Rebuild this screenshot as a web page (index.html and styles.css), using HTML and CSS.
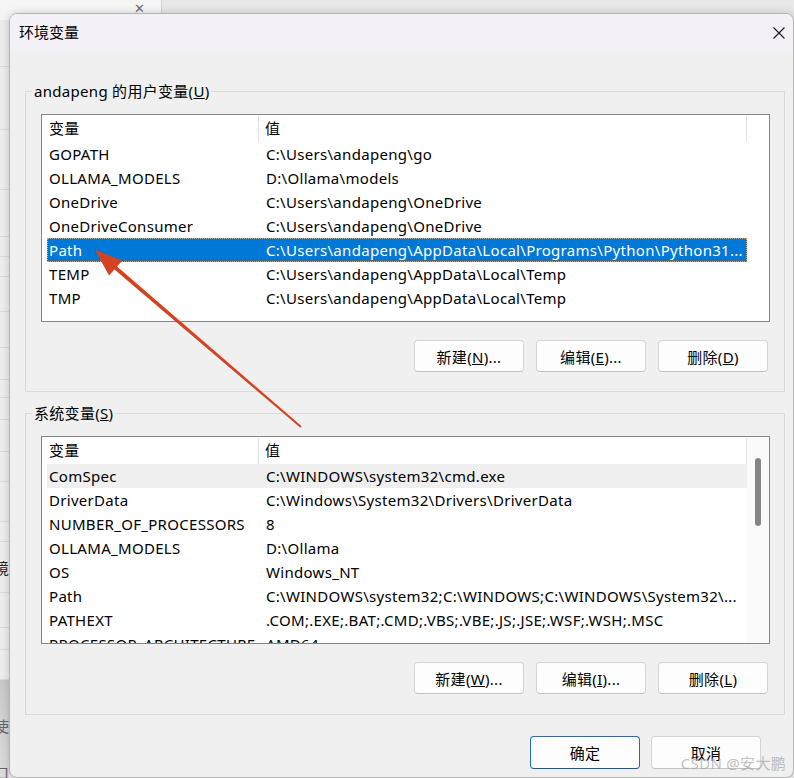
FILE: index.html
```html
<!DOCTYPE html>
<html lang="zh-CN">

<head>
    <meta charset="UTF-8">
    <meta name="viewport" content="width=device-width, initial-scale=1.0">
    <title>环境变量</title>
    <link rel="stylesheet" href="styles.css">
</head>

<body>
    <div class="desk">
        <!-- 后面的窗口 -->
        <div class="back-win"><span class="back-x">✕</span></div>
        <div class="back-side">
            <div class="side-row h54"></div>
            <div class="side-row h63"></div>
            <div class="side-row h60"></div>
            <div class="side-row h47"></div>
            <div class="side-row h20"></div>
            <div class="side-row h20"></div>
            <div class="side-row h35"></div>
            <div class="side-row h36"></div>
            <div class="side-row h32"></div>
            <div class="side-row h18"></div>
            <div class="side-row h22"></div>
            <div class="side-row h32"></div>
            <div class="side-row h30"></div>
            <div class="side-row h40"></div>
            <div class="side-row h20"></div>
            <div class="side-row h51 side-text"><span>环境</span></div>
            <div class="side-row h35"></div>
            <div class="side-row h22"></div>
            <div class="side-row h30"></div>
            <div class="side-dark">
                <div class="side-text dark-text"><span>快使</span></div>
                <div class="side-text dark-text low"><span>窗口</span></div>
            </div>
        </div>

        <div class="dialog">
            <div class="titlebar">
                <span class="title">环境变量</span>
                <svg class="close" width="12" height="12" viewBox="0 0 12 12">
                    <path d="M0.5 0.5 L11.5 11.5 M11.5 0.5 L0.5 11.5" stroke="#1a1a1a" stroke-width="1.1" fill="none" />
                </svg>
            </div>

            <div class="dlg-body">
                <fieldset class="group group-user">
                    <legend>andapeng 的用户变量(<u>U</u>)</legend>
                    <div class="list">
                        <div class="list-main">
                            <div class="list-head">
                                <div class="head-name">变量</div>
                                <div class="head-val">值</div>
                            </div>
                            <div class="row"><div class="cell-name">GOPATH</div><div class="cell-val">C:\Users\andapeng\go</div></div>
                            <div class="row"><div class="cell-name">OLLAMA_MODELS</div><div class="cell-val">D:\Ollama\models</div></div>
                            <div class="row"><div class="cell-name">OneDrive</div><div class="cell-val">C:\Users\andapeng\OneDrive</div></div>
                            <div class="row"><div class="cell-name">OneDriveConsumer</div><div class="cell-val">C:\Users\andapeng\OneDrive</div></div>
                            <div class="row selected"><div class="cell-name">Path</div><div class="cell-val">C:\Users\andapeng\AppData\Local\Programs\Python\Python31...</div></div>
                            <div class="row"><div class="cell-name">TEMP</div><div class="cell-val">C:\Users\andapeng\AppData\Local\Temp</div></div>
                            <div class="row"><div class="cell-name">TMP</div><div class="cell-val">C:\Users\andapeng\AppData\Local\Temp</div></div>
                        </div>
                        <div class="vscroll"></div>
                    </div>
                    <div class="btn-row">
                        <button class="btn">新建(<u>N</u>)...</button>
                        <button class="btn">编辑(<u>E</u>)...</button>
                        <button class="btn">删除(<u>D</u>)</button>
                    </div>
                </fieldset>

                <fieldset class="group group-sys">
                    <legend>系统变量(<u>S</u>)</legend>
                    <div class="list">
                        <div class="list-main">
                            <div class="list-head">
                                <div class="head-name">变量</div>
                                <div class="head-val">值</div>
                            </div>
                            <div class="row hover"><div class="cell-name">ComSpec</div><div class="cell-val">C:\WINDOWS\system32\cmd.exe</div></div>
                            <div class="row"><div class="cell-name">DriverData</div><div class="cell-val">C:\Windows\System32\Drivers\DriverData</div></div>
                            <div class="row"><div class="cell-name">NUMBER_OF_PROCESSORS</div><div class="cell-val">8</div></div>
                            <div class="row"><div class="cell-name">OLLAMA_MODELS</div><div class="cell-val">D:\Ollama</div></div>
                            <div class="row"><div class="cell-name">OS</div><div class="cell-val">Windows_NT</div></div>
                            <div class="row"><div class="cell-name">Path</div><div class="cell-val">C:\WINDOWS\system32;C:\WINDOWS;C:\WINDOWS\System32\...</div></div>
                            <div class="row"><div class="cell-name">PATHEXT</div><div class="cell-val">.COM;.EXE;.BAT;.CMD;.VBS;.VBE;.JS;.JSE;.WSF;.WSH;.MSC</div></div>
                            <div class="row"><div class="cell-name">PROCESSOR_ARCHITECTURE</div><div class="cell-val">AMD64</div></div>
                        </div>
                        <div class="vscroll track">
                            <div class="thumb"></div>
                        </div>
                    </div>
                    <div class="btn-row">
                        <button class="btn">新建(<u>W</u>)...</button>
                        <button class="btn">编辑(<u>I</u>)...</button>
                        <button class="btn">删除(<u>L</u>)</button>
                    </div>
                </fieldset>

                <div class="footer">
                    <button class="btn btn-big btn-ok">确定</button>
                    <button class="btn btn-big">取消</button>
                </div>
            </div>

            <div class="watermark">CSDN @安大鹏</div>
        </div>

        <!-- 红色箭头 -->
        <svg class="arrow" width="794" height="778" viewBox="0 0 794 778">
            <polygon fill="#d6421f"
                points="95,250 122,261 117,266.4 301.6,426.2 300.4,427.8 114.4,269.4 109,275.5" />
        </svg>
    </div>
</body>

</html>
```

FILE: styles.css
```css
* {
    box-sizing: border-box;
    margin: 0;
}

body {
    width: 794px;
    height: 778px;
    overflow: hidden;
    background-color: #e8e8e8;
    font-family: "Noto Sans", "Noto Sans CJK SC", sans-serif;
    font-size: 15px;
    color: #000;
}

.desk {
    position: relative;
    display: flex;
    width: 794px;
    height: 778px;
    padding-top: 13px;
}

/* 后面的窗口 */
.back-win {
    position: absolute;
    left: 0;
    top: 0;
    width: 162px;
    height: 20px;
    background-color: #f6f6f6;
    border-right: 1px solid #d2d2d2;
}

.back-x {
    position: absolute;
    left: 134px;
    top: 0;
    font-size: 13px;
    line-height: 16px;
    color: #6e6e6e;
}

.back-side {
    width: 9px;
    flex: none;
    display: flex;
    flex-direction: column;
    overflow: hidden;
    background-color: #ececec;
}

.side-row {
    flex: none;
    border-bottom: 1px solid #d8d8d8;
}

.h18 { height: 18px; }
.h20 { height: 20px; }
.h22 { height: 22px; }
.h30 { height: 30px; }
.h32 { height: 32px; }
.h35 { height: 35px; }
.h36 { height: 36px; }
.h40 { height: 40px; }
.h47 { height: 47px; }
.h51 { height: 51px; }
.h54 { height: 54px; }
.h60 { height: 60px; }
.h63 { height: 63px; }

.side-text {
    display: flex;
    justify-content: flex-end;
    align-items: center;
    white-space: nowrap;
    font-size: 15px;
    color: #222;
}

.side-dark {
    flex: 1;
    display: flex;
    flex-direction: column;
    background: linear-gradient(#c9c9c9, #dcdcdc);
}

.dark-text {
    height: 56px;
    padding-top: 34px;
    color: #666;
}

.dark-text.low {
    height: 42px;
    padding-top: 30px;
}

/* 对话框 */
.dialog {
    position: relative;
    flex: 1;
    display: flex;
    flex-direction: column;
    background-color: #f0f0f0;
    border: 1px solid #b4b4b4;
    border-radius: 8px;
    overflow: hidden;
    box-shadow: 0 0 8px rgba(0, 0, 0, 0.18);
    letter-spacing: 0.3px;
}

.titlebar {
    height: 37px;
    flex: none;
    display: flex;
    align-items: center;
    justify-content: space-between;
    padding: 0 8px 3px 9px;
    background-color: #f3f1f7;
}

.title {
    font-size: 15px;
    letter-spacing: 0;
}

.close {
    margin-top: 3px;
}

.dlg-body {
    padding: 0 8px 0 15px;
}

.group {
    border: 1px solid #dadada;
    padding: 0;
    min-width: 0;
}

.group-user {
    margin-top: 30px;
}

.group-sys {
    margin-top: 11px;
}

.group legend {
    margin-left: 6px;
    padding: 0 2px;
    line-height: 20px;
}

.list {
    display: flex;
    height: 208px;
    margin: 13px 14px 0 15px;
    background-color: #fff;
    border: 1px solid #858585;
    overflow: hidden;
}

.list-main {
    width: 705px;
    flex: none;
    padding-top: 1px;
}

.list-head {
    display: flex;
    height: 26px;
    line-height: 25px;
}

.head-name {
    width: 217px;
    padding-left: 7px;
    border-right: 1px solid #e3e3e3;
}

.head-val {
    width: 488px;
    padding-left: 6px;
    border-right: 1px solid #e3e3e3;
}

.row {
    display: flex;
    height: 24px;
    line-height: 24px;
    margin-left: 5px;
    width: 700px;
    white-space: nowrap;
}

.cell-name {
    width: 219px;
    flex: none;
    padding-left: 2px;
}

.cell-val {
    flex: 1;
    overflow: hidden;
}

.row.selected {
    background-color: #0078d7;
    color: #fff;
    outline: 1px dotted #f0a33c;
    outline-offset: -1px;
}

.row.hover {
    background-color: #efefef;
}

.vscroll {
    flex: 1;
    display: flex;
    justify-content: center;
    padding-top: 21px;
}

.vscroll.track {
    background-color: #fafafa;
}

.thumb {
    width: 6px;
    height: 68px;
    border-radius: 3px;
    background-color: #858585;
}

.btn-row {
    display: flex;
    justify-content: flex-end;
    gap: 12px;
    margin: 18px 16px 19px 0;
}

.group-sys .btn-row {
    margin-bottom: 20px;
}

.btn {
    width: 110px;
    height: 32px;
    font-family: inherit;
    font-size: 15px;
    letter-spacing: 0.3px;
    color: #000;
    background-color: #fdfdfd;
    border: 1px solid #d4d4d4;
    border-bottom-color: #c2c2c2;
    border-radius: 4px;
    padding: 0;
}

.footer {
    display: flex;
    justify-content: flex-end;
    gap: 11px;
    margin-top: 21px;
    padding-right: 24px;
}

.btn-big {
    height: 33px;
}

.btn-ok {
    border-color: #1a6fc4;
    border-bottom-color: #0a5aa8;
}

.watermark {
    position: absolute;
    right: 7px;
    bottom: 4px;
    font-size: 15px;
    color: rgba(170, 170, 170, 0.75);
    letter-spacing: 0.3px;
}

.arrow {
    position: absolute;
    left: 0;
    top: 0;
    pointer-events: none;
}
```
